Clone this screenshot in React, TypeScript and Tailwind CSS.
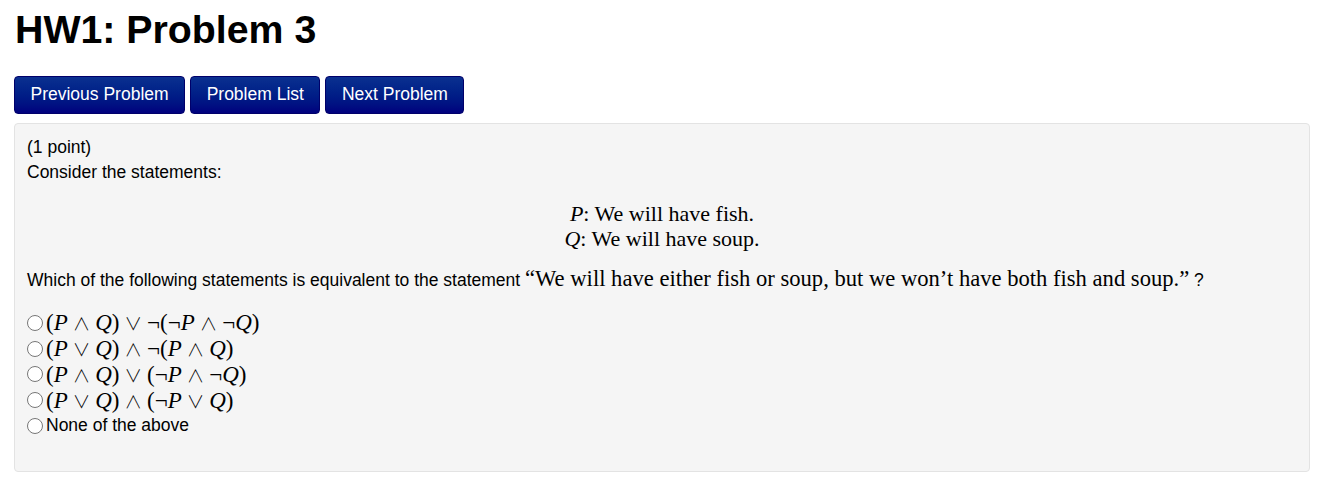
const sans = { fontFamily: '"Liberation Sans", Arial, sans-serif' };

function V({ children }: { children: string }) {
  return <i className="italic">{children}</i>;
}

function Op({ children }: { children: string }) {
  return (
    <span className="mx-[5px] font-['Noto_Sans_CJK_JP',sans-serif] font-light text-[17.5px] leading-[25px]">
      {children}
    </span>
  );
}

const options = [
  <>
    (<V>P</V>
    <Op>∧</Op>
    <V>Q</V>)<Op>∨</Op>¬(¬<V>P</V>
    <Op>∧</Op>¬<V>Q</V>)
  </>,
  <>
    (<V>P</V>
    <Op>∨</Op>
    <V>Q</V>)<Op>∧</Op>¬(<V>P</V>
    <Op>∧</Op>
    <V>Q</V>)
  </>,
  <>
    (<V>P</V>
    <Op>∧</Op>
    <V>Q</V>)<Op>∨</Op>(¬<V>P</V>
    <Op>∧</Op>¬<V>Q</V>)
  </>,
  <>
    (<V>P</V>
    <Op>∨</Op>
    <V>Q</V>)<Op>∧</Op>(¬<V>P</V>
    <Op>∨</Op>
    <V>Q</V>)
  </>,
];

export default function App() {
  return (
    <div className="bg-white min-h-[490px] px-[14px] text-black" style={sans}>
      <h1 className="pt-[9px] pl-[1px] text-[39.3px] font-bold leading-[40px]">HW1: Problem 3</h1>

      <div className="mt-[27px] flex gap-[5px]">
        {['Previous Problem', 'Problem List', 'Next Problem'].map((label) => (
          <button
            key={label}
            className="h-[38px] rounded-[4px] border border-[#00006a] bg-gradient-to-b from-[#0b3090] to-[#00007e] px-[15.5px] text-[17.5px] leading-none text-white"
          >
            {label}
          </button>
        ))}
      </div>

      <div className="mt-[9px] rounded-[4px] border border-[#e3e3e3] bg-[#f5f5f5] px-[12px] pt-[11px] pb-[32px] text-[17.5px] leading-[25px]">
        <div>(1 point)</div>
        <div>Consider the statements:</div>

        <div className="mt-[16px] mb-[15px] text-center font-['Liberation_Serif',serif] text-[22px] leading-[25px]">
          <div>
            <V>P</V>: We will have fish.
          </div>
          <div>
            <V>Q</V>: We will have soup.
          </div>
        </div>

        <div className="leading-[26px]">
          Which of the following statements is equivalent to the statement{' '}
          <span className="font-['Liberation_Serif',serif] text-[22.6px]">
            “We will have either fish or soup, but we won’t have both fish and soup.”
          </span>{' '}
          ?
        </div>

        <div className="mt-[17px] flex flex-col">
          {options.map((expr, i) => (
            <label key={i} className="flex h-[25.75px] items-center">
              <input type="radio" name="ans" className="m-0 h-[16px] w-[16px] shrink-0" />
              <span className="ml-[3px] whitespace-nowrap font-['Liberation_Serif',serif] text-[23px] leading-[25px]">
                {expr}
              </span>
            </label>
          ))}
          <label className="flex h-[25.75px] items-center">
            <input type="radio" name="ans" className="m-0 h-[16px] w-[16px] shrink-0" />
            <span className="ml-[3px]">None of the above</span>
          </label>
        </div>
      </div>
    </div>
  );
}
